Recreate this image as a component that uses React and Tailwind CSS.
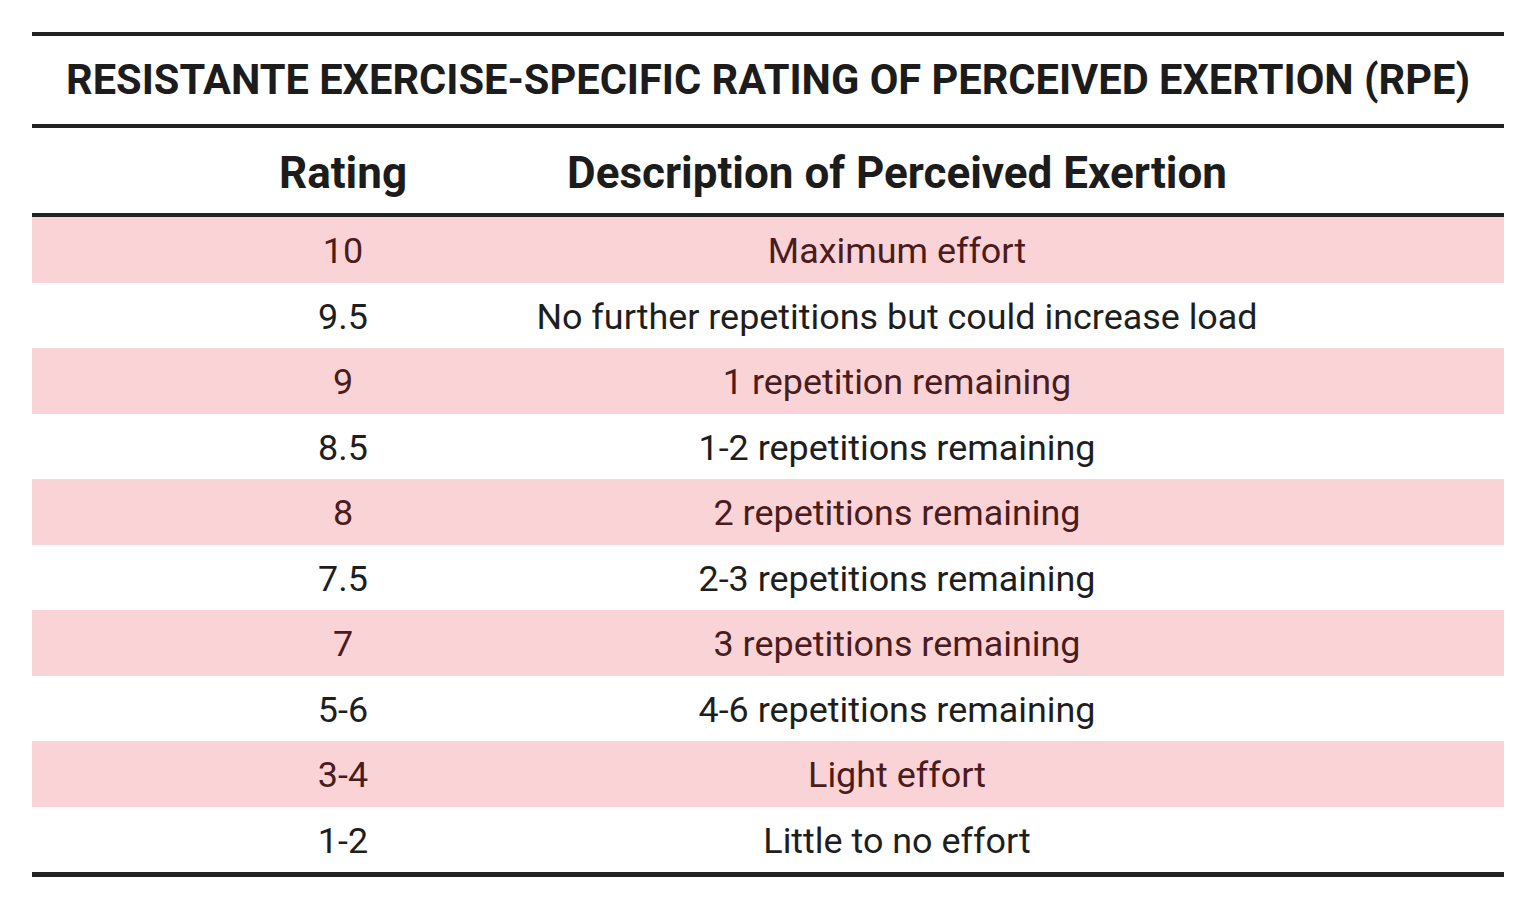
import React from "react";

const rows = [
  ["10", "Maximum effort"],
  ["9.5", "No further repetitions but could increase load"],
  ["9", "1 repetition remaining"],
  ["8.5", "1-2 repetitions remaining"],
  ["8", "2 repetitions remaining"],
  ["7.5", "2-3 repetitions remaining"],
  ["7", "3 repetitions remaining"],
  ["5-6", "4-6 repetitions remaining"],
  ["3-4", "Light effort"],
  ["1-2", "Little to no effort"],
];

export default function App() {
  return (
    <div
      className="w-[1536px] h-[909px] bg-white pt-[32px] pl-[32px]"
      style={{ fontFamily: "Roboto, sans-serif" }}
    >
      <div className="w-[1472px]">
        {/* title */}
        <div className="border-t-[4px] border-b-[4px] border-[#222222] h-[96px] flex items-center justify-center">
          <h1 className="text-[41.6px] font-bold text-[#1c1c1c] leading-none whitespace-nowrap">
            RESISTANTE EXERCISE-SPECIFIC RATING OF PERCEIVED EXERTION (RPE)
          </h1>
        </div>

        {/* header */}
        <div className="grid grid-cols-[622px_486px_1fr] h-[89px] items-center border-b-[4px] border-[#222222] text-[44px] font-bold text-[#1c1c1c] leading-none pt-[5px]">
          <div className="flex justify-center">Rating</div>
          <div className="flex justify-center whitespace-nowrap">Description of Perceived Exertion</div>
          <div />
        </div>

        {/* rows */}
        <div className="border-b-[5px] border-[#222222]">
          {rows.map(([r, d], i) => (
            <div
              key={r}
              className={
                i % 2 === 0
                  ? "grid grid-cols-[622px_486px_1fr] h-[65.5px] items-center pt-[5px] bg-[#f9d3d5] text-[#4a1c20] text-[35.9px] leading-none"
                  : "grid grid-cols-[622px_486px_1fr] h-[65.5px] items-center pt-[5px] bg-white text-[#1e1e1e] text-[35.9px] leading-none"
              }
            >
              <div className="flex justify-center">{r}</div>
              <div className="flex justify-center whitespace-nowrap">{d}</div>
              <div />
            </div>
          ))}
        </div>
      </div>
    </div>
  );
}
